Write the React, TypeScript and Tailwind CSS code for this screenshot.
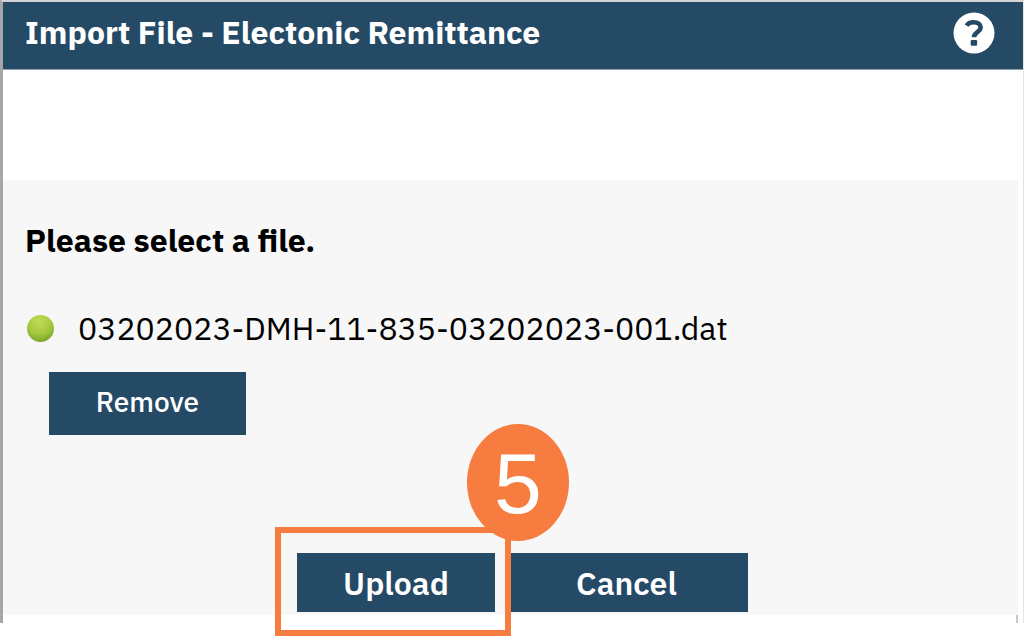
import { useState } from 'react';

const btn = 'bg-[#244a66] text-white text-center hover:bg-[#1c3c54]';

function HelpIcon() {
  return (
    <svg viewBox="0 0 42 42" className="w-[42px] h-[42px]" aria-hidden="true">
      <circle cx="21" cy="21" r="20.5" fill="#fff" />
      <path d="M13.600 13.600c1.500-2.400 3.900-3.300 7-3.300 4.200 0 7 1.900 7 5 0 5-6.600 4.700-6.600 10" fill="none" stroke="#244a66" strokeWidth="4.600" />
      <rect x="17.700" y="28" width="6.400" height="5.800" rx="1" fill="#244a66" />
    </svg>
  );
}

function StepMarker({ step }: { step: number }) {
  return (
    <div className="absolute -left-[22px] -right-4 -top-[26px] -bottom-6 border-6 border-[#f77c3f] pointer-events-none">
      <div className="absolute -right-16 -top-[109px] w-[102px] h-[117px] rounded-[50%] bg-[#f77c3f] flex items-center justify-center font-['Liberation_Sans',Arial,sans-serif] font-normal text-[86px] leading-none text-white">
        {step}
      </div>
    </div>
  );
}

export default function App() {
  const [files, setFiles] = useState(['03202023-DMH-11-835-03202023-001.dat']);

  return (
    <div className="min-h-screen bg-white pb-[13px] overflow-hidden font-['IBM_Plex_Sans','Noto_Sans',sans-serif] text-black">
      <div className="border-t-2 border-t-[#d4d4d4] border-l-3 border-l-[#a6a6a6] border-r border-r-[#e4e4e4]">
        <header className="bg-[#244a66] h-[68px] flex items-start justify-between pl-[22px] pr-7 pt-[10px] border-b border-b-[#8fa1af]">
          <h1 className="text-[32px] leading-10 font-bold text-white">Import File - Electonic Remittance</h1>
          <button type="button" aria-label="Help" className="rounded-full">
            <HelpIcon />
          </button>
        </header>

        <main className="mt-[110px] mr-[5px] bg-[#f7f7f7] pt-10 pb-[3px]">
          <h2 className="px-[22px] text-[32px] leading-10 font-bold">Please select a file.</h2>
          <ul className="mt-12">
            {files.map(f => (
              <li key={f}>
                <div className="flex items-center px-6">
                  <span className="w-[27px] h-[27px] rounded-full shrink-0 bg-[radial-gradient(circle_at_45%_25%,#c4dc55_0%,#a3c83f_50%,#5f8f1e_100%)]" />
                  <span className="ml-6 text-[32px] leading-10">{f}</span>
                </div>
                <button type="button" onClick={() => setFiles(files.filter(x => x !== f))} className={`${btn} ml-[46px] mt-6 w-[197px] h-[63px] pb-1 text-[28px] leading-10 font-medium`}>
                  Remove
                </button>
              </li>
            ))}
          </ul>
          <div className="mt-[118px] pl-6 flex justify-center gap-[10px] text-[32px] leading-10 font-semibold">
            <div className="relative z-10">
              <button type="button" className={`${btn} w-[198px] h-[59px]`}>Upload</button>
              <StepMarker step={5} />
            </div>
            <button type="button" className={`${btn} w-[243px] h-[59px]`}>Cancel</button>
          </div>
        </main>
        <div className="h-2 mr-[5px] border-r-2 border-r-[#c8c8c8]" />
      </div>
    </div>
  );
}
